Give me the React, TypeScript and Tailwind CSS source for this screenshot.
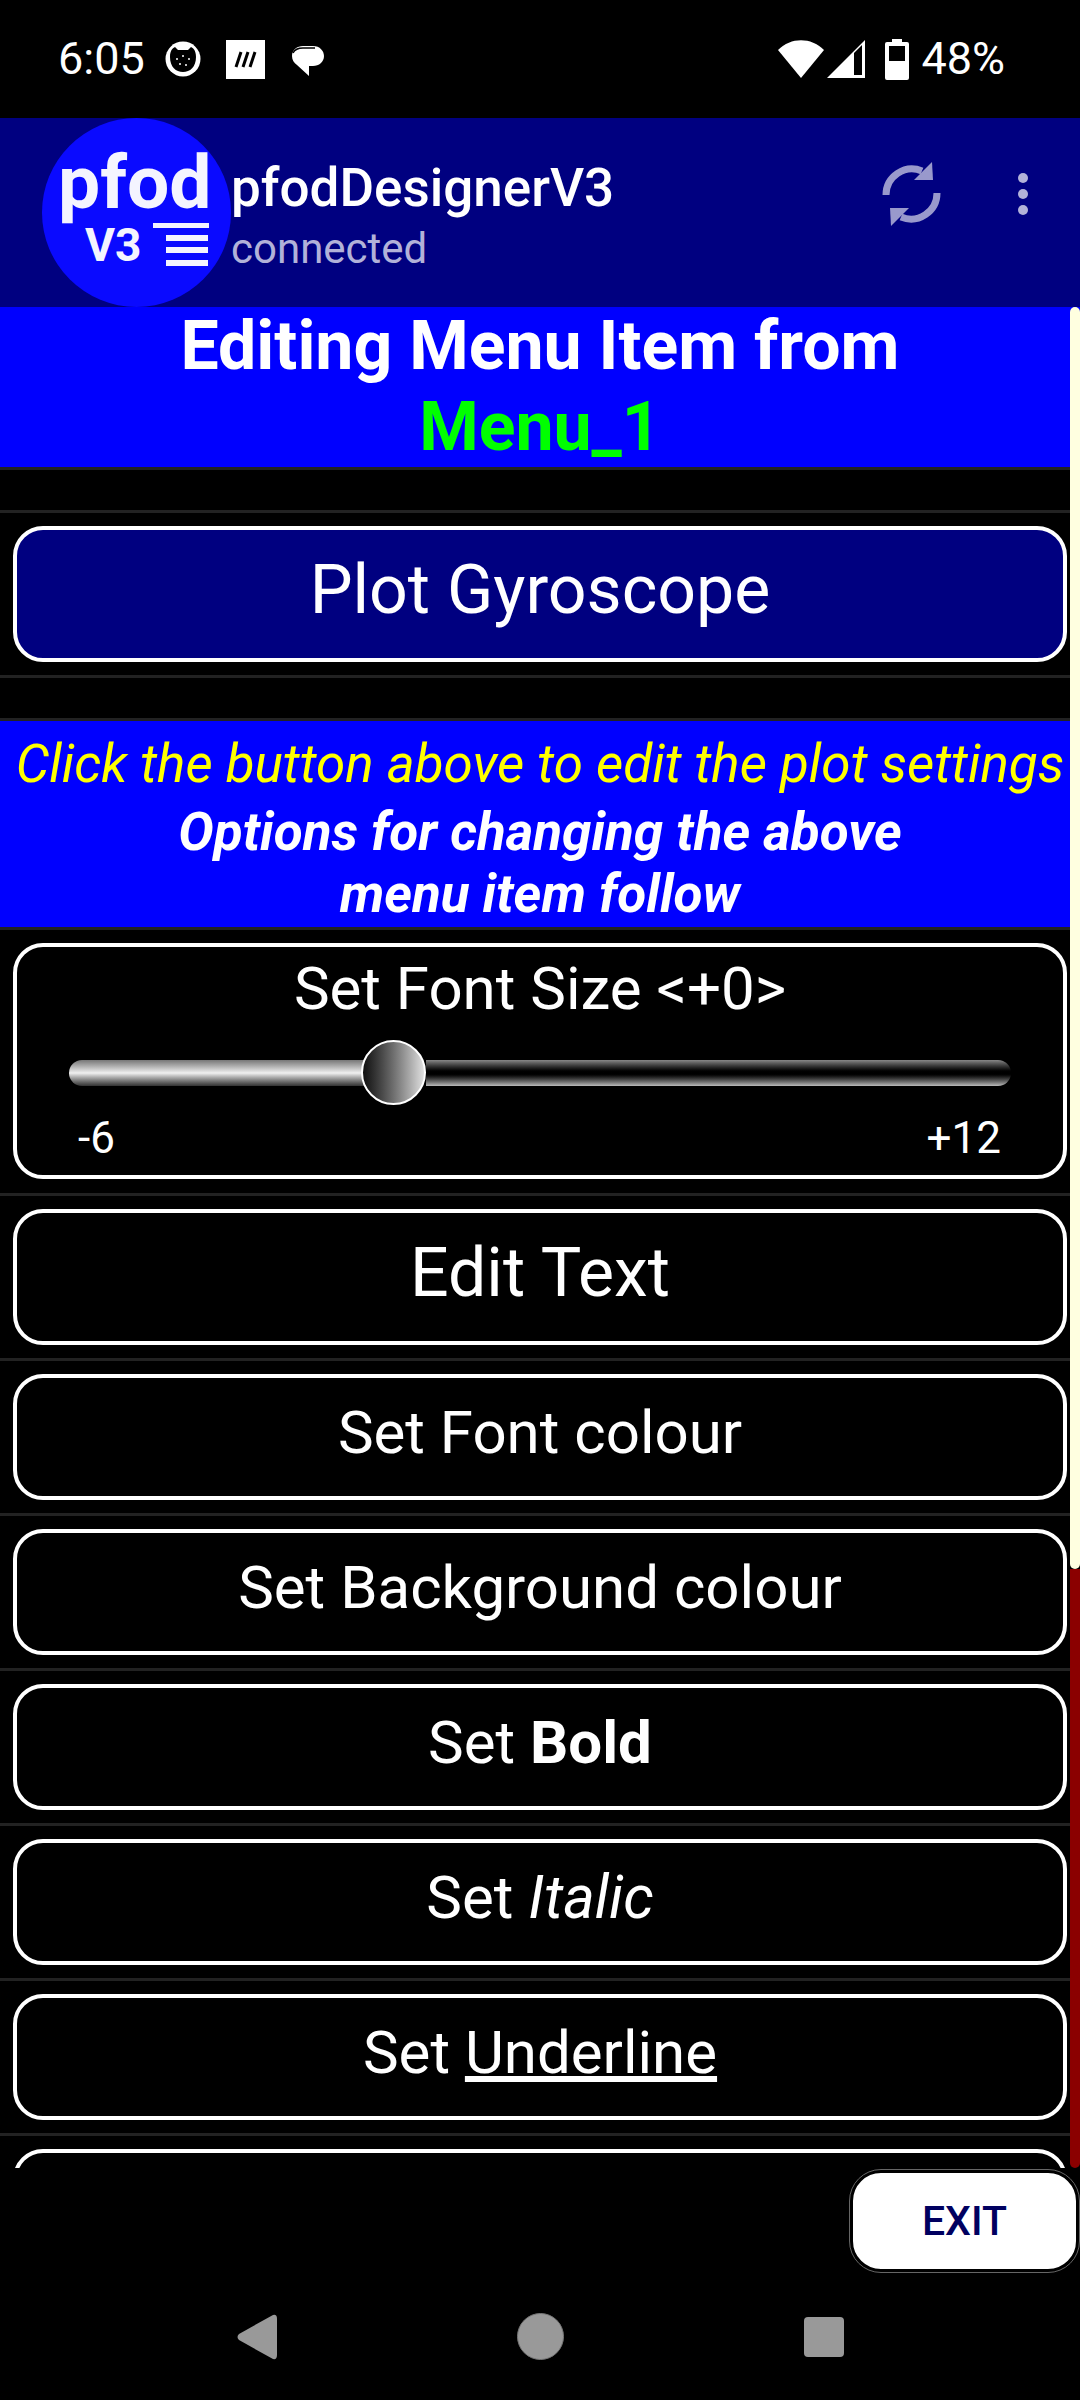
import type { ReactNode } from 'react';

const Divider = () => <div className="h-[3px] bg-[#222222]" />;

function MenuButton({ children, tall = false }: { children: ReactNode; tall?: boolean }) {
  return (
    <>
      <div className="p-[13px]">
        <button
          className={`flex w-full items-center justify-center rounded-[30px] border-4 border-white bg-black text-white ${
            tall ? 'h-[136px] pb-[8px] text-[68px]' : 'h-[126px] pb-[9px] text-[60px]'
          }`}
        >
          {children}
        </button>
      </div>
      <Divider />
    </>
  );
}

function StatusBar() {
  return (
    <div className="flex h-[118px] items-center justify-between bg-black pl-[58px] pr-[75px] text-[45px] text-white">
      <div className="flex items-center">
        <span className="w-[107px]">6:05</span>
        {/* cat face */}
        <svg width="36" height="36" viewBox="0 0 36 36">
          <circle cx="18" cy="18" r="17.5" fill="#fff" />
          <path d="M5 16 C5 9 8 7 10 6 L13 9 H23 L26 6 C28 7 31 9 31 16 C31 26 25 31 18 31 C11 31 5 26 5 16Z" fill="#000" />
          <circle cx="12" cy="18" r="1" fill="#fff" />
          <circle cx="18" cy="15" r="1" fill="#fff" />
          <circle cx="24" cy="18" r="1" fill="#fff" />
          <circle cx="15" cy="23" r="1" fill="#fff" />
          <circle cx="21" cy="24" r="1" fill="#fff" />
        </svg>
        <svg className="ml-[25px]" width="39" height="39" viewBox="0 0 39 39">
          <rect width="39" height="39" fill="#fff" />
          <path d="M10 27 L15 12 M17 27 L22 12 M24 27 L29 12" stroke="#000" strokeWidth="3" />
        </svg>
        <svg className="ml-[26px] mt-[4px]" width="34" height="34" viewBox="0 0 34 34">
          <path d="M12 2 H22 C29 2 33 7 33 12 C33 18 28 22 22 22 H18 V32 L6 21 C3 19 1 16 1 12 C1 6 6 2 12 2Z" fill="#fff" />
          <path d="M2 9 C4 5 8 4 12 4 H24" stroke="#000" strokeWidth="1.5" fill="none" />
        </svg>
      </div>
      <div className="flex items-center">
        <svg width="46" height="38" viewBox="0 0 46 38">
          <path d="M0 10 C13 -3 33 -3 46 10 L23 38Z" fill="#fff" />
        </svg>
        <svg className="ml-[3px]" width="38" height="38" viewBox="0 0 38 38">
          <path d="M38 0 V38 H0Z" fill="#fff" />
          <path d="M27 13 V35 H35 V5Z" fill="#000" />
        </svg>
        <svg className="ml-[20px]" width="24" height="41" viewBox="0 0 24 41">
          <path d="M7 0 H17 V3 H22 Q24 3 24 5 V39 Q24 41 22 41 H2 Q0 41 0 39 V5 Q0 3 2 3 H7Z" fill="#fff" />
          <rect x="4" y="7" width="16" height="15" fill="#000" />
        </svg>
        <span className="ml-[12px]">48%</span>
      </div>
    </div>
  );
}

function Logo() {
  return (
    <svg className="absolute left-[42px] top-0" width="189" height="189" viewBox="0 0 189 189">
      <circle cx="94.5" cy="94.5" r="94.5" fill="#0a0aff" />
      <text x="16" y="90" fontFamily="Roboto, sans-serif" fontWeight="700" fontSize="75" fill="#f4f4ff">
        pfod
      </text>
      <text x="43" y="143" fontFamily="Roboto, sans-serif" fontWeight="700" fontSize="46" fill="#f4f4ff">
        V3
      </text>
      <path d="M111 105 H167 V110 H111Z M124 117 H166 V123 H124Z M124 129 H166 V135 H124Z M124 142 H166 V148 H124Z" fill="#f4f4ff" />
    </svg>
  );
}

function SyncIcon() {
  return (
    <svg className="mb-[38px] mr-[76px]" width="60" height="64" viewBox="0 0 60 64" fill="none">
      <path d="M4 33 A26 26 0 0 1 40 9" stroke="#9999cc" strokeWidth="7" />
      <path d="M50 0 L51 18 L32 18Z" fill="#9999cc" />
      <path d="M55 31 A26 26 0 0 1 19 55" stroke="#9999cc" strokeWidth="7" />
      <path d="M9 64 L8 46 L27 46Z" fill="#9999cc" />
    </svg>
  );
}

function AppBar() {
  return (
    <div className="relative flex h-[189px] items-center bg-[#000080] pl-[231px] pr-[52px]">
      <Logo />
      <div className="flex flex-1 flex-col pt-[5px] leading-none">
        <span className="text-[53px] font-medium leading-[62px] text-white">pfodDesignerV3</span>
        <span className="mt-[5px] text-[42px] leading-[50px] text-[#b2b2d9]">connected</span>
      </div>
      <SyncIcon />
      <div className="mb-[38px] flex flex-col gap-[6px]">
        <div className="h-[10px] w-[10px] rounded-full bg-[#b2b2d9]" />
        <div className="h-[10px] w-[10px] rounded-full bg-[#b2b2d9]" />
        <div className="h-[10px] w-[10px] rounded-full bg-[#b2b2d9]" />
      </div>
    </div>
  );
}

function FontSlider() {
  return (
    <>
      <div className="px-[13px] pb-[14px] pt-[13px]">
        <div className="h-[236px] rounded-[30px] border-4 border-white bg-black px-[52px] pt-[7px] text-white">
          <div className="text-center text-[60px] leading-[70px]">Set Font Size &lt;+0&gt;</div>
          <div className="mt-[16px] flex items-center">
            <div className="h-[26px] w-[296px] rounded-l-[13px] bg-gradient-to-b from-[#777777] via-[#f0f0f0] to-[#333333]" />
            <div className="-ml-[4px] h-[65px] w-[65px] shrink-0 rounded-full border-[2.5px] border-white bg-gradient-to-r from-[#111111] to-[#e0e0e0]" />
            <div className="h-[26px] flex-1 rounded-r-[13px] bg-gradient-to-b from-[#888888] via-[#000000] to-[#bbbbbb]" />
          </div>
          <div className="mt-[7px] flex justify-between pl-[9px] pr-[10px] text-[44px] leading-[52px]">
            <span>-6</span>
            <span>+12</span>
          </div>
        </div>
      </div>
      <Divider />
    </>
  );
}

function Footer() {
  return (
    <div className="flex flex-1 flex-col">
      <div className="flex justify-end pt-[1px]">
        <button className="h-[104px] w-[231px] rounded-[32px] border-4 border-black bg-white pt-[2px] text-[41px] font-medium text-[#000060] outline outline-1 -outline-offset-1 outline-[#666666]">
          EXIT
        </button>
      </div>
      <div className="mt-[40px] flex items-center pl-[237px]">
        <svg width="40" height="46" viewBox="0 0 40 46">
          <path d="M36 1 Q40 0 40 5 V41 Q40 46 36 45 L2 26 Q-1 23 2 20Z" fill="#999999" />
        </svg>
        <div className="ml-[240px] h-[47px] w-[47px] rounded-full border border-[#777777] bg-[#999999]" />
        <div className="ml-[240px] h-[40px] w-[40px] rounded-[4px] bg-[#999999]" />
      </div>
    </div>
  );
}

export default function App() {
  return (
    <div className="flex h-[2400px] w-[1080px] flex-col overflow-hidden bg-black font-['Roboto',sans-serif]">
      <StatusBar />
      <AppBar />

      <div className="relative h-[1861px] overflow-hidden">
        <div className="flex h-[160px] flex-col items-center bg-[#0000ff] font-bold">
          <div className="text-[68px] leading-[78px] text-white">Editing Menu Item from</div>
          <div className="mt-[3px] text-[68px] leading-[78px] text-[#00ff00]">Menu_1</div>
        </div>
        <Divider />
        <div className="h-[40px]" />
        <Divider />
        <div className="p-[13px]">
          <button className="flex h-[136px] w-full items-center justify-center rounded-[30px] border-4 border-white bg-[#000080] pb-[8px] text-[68px] text-white">
            Plot Gyroscope
          </button>
        </div>
        <Divider />
        <div className="h-[40px]" />
        <Divider />
        <div className="h-[206px] bg-[#0000ff] pt-[12px] text-center italic">
          <div className="whitespace-nowrap text-[53px] leading-[62px] text-[#ffff00]">Click the button above to edit the plot settings</div>
          <div className="mt-[6px] text-[53px] font-bold leading-[62px] text-white">
            Options for changing the above
            <br />
            menu item follow
          </div>
        </div>
        <Divider />
        <FontSlider />
        <MenuButton tall>Edit Text</MenuButton>
        <MenuButton>Set Font colour</MenuButton>
        <MenuButton>Set Background colour</MenuButton>
        <MenuButton>
          <span>
            Set <b>Bold</b>
          </span>
        </MenuButton>
        <MenuButton>
          <span>
            Set <i>Italic</i>
          </span>
        </MenuButton>
        <MenuButton>
          <span>
            Set <u>Underline</u>
          </span>
        </MenuButton>
        <MenuButton> </MenuButton>

        {/* scroll indicator */}
        <div className="absolute right-0 top-0 flex h-full w-[10px] flex-col">
          <div className="h-[1262px] rounded-[5px] bg-[#ffffe0]" />
          <div className="flex-1 rounded-b-[5px] bg-[#8b0000]" />
        </div>
      </div>

      <Footer />
    </div>
  );
}
